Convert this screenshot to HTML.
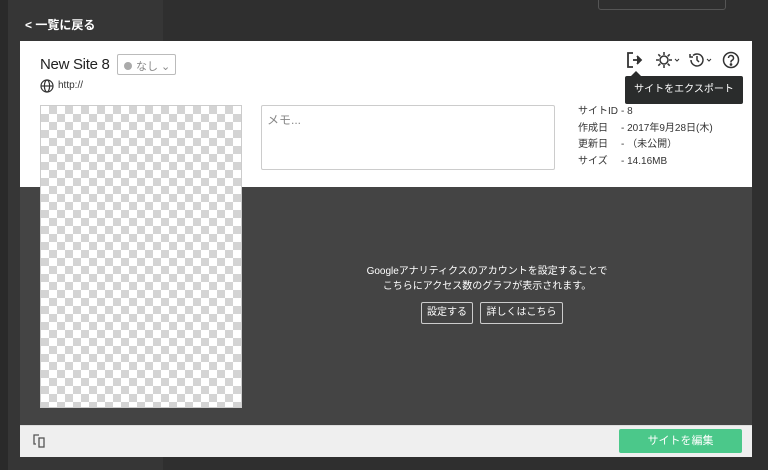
<!DOCTYPE html>
<html><head><meta charset="utf-8"><style>
*{margin:0;padding:0;box-sizing:border-box}
body{width:768px;height:470px;overflow:hidden;background:#2f2f2f;font-family:"Liberation Sans","Noto Sans CJK JP",sans-serif;position:relative}
.abs{position:absolute}
</style></head><body>
<div class="abs" style="left:0;top:0;width:163px;height:470px;background:#363636"></div>
<div class="abs" style="left:0;top:0;width:8px;height:470px;background:#2a2a2a"></div>
<div class="abs" style="left:598px;top:-10px;width:128px;height:20px;border:1px solid #555;border-radius:3px"></div>
<div class="abs" style="left:25px;top:16px;color:#fff;font-size:12px;font-weight:bold">&lt; 一覧に戻る</div>
<div class="abs" style="left:20px;top:41px;width:732px;height:146px;background:#fff"></div>
<div class="abs" style="left:20px;top:187px;width:732px;height:238px;background:#444"></div>
<div class="abs" style="left:20px;top:425px;width:732px;height:32px;background:#efefef;border-top:1px solid #ddd"></div>
<div class="abs" style="left:40px;top:56px;font-size:15px;color:#222;letter-spacing:-0.3px">New Site 8</div>
<div class="abs" style="left:117px;top:54px;width:59px;height:21px;border:1px solid #bbb;border-radius:2px;font-size:11px;color:#888;padding:3px 0 0 6px;white-space:nowrap"><span style="display:inline-block;width:8px;height:8px;border-radius:50%;background:#aaa;margin-right:4px"></span>なし ⌄</div>
<svg class="abs" style="left:40px;top:79px" width="14" height="14" viewBox="0 0 14 14" fill="none" stroke="#333" stroke-width="1.2"><circle cx="7" cy="7" r="6"/><ellipse cx="7" cy="7" rx="2.6" ry="6"/><path d="M1 7h12"/></svg>
<div class="abs" style="left:58px;top:80px;font-size:10px;color:#333">http://</div>
<div class="abs" style="left:40px;top:105px;width:202px;height:303px;border:1px solid #ccc;background-color:#fff;background-image:linear-gradient(45deg,#d4d4d4 25%,transparent 25%,transparent 75%,#d4d4d4 75%),linear-gradient(45deg,#d4d4d4 25%,transparent 25%,transparent 75%,#d4d4d4 75%);background-size:16px 16px;background-position:0 0,8px 8px"></div>
<div class="abs" style="left:261px;top:105px;width:294px;height:65px;border:1px solid #ccc;border-radius:2px;font-size:12px;color:#888;padding:5px 5px">メモ...</div>
<div class="abs" style="left:578px;top:104px;font-size:10px;color:#333;line-height:16.5px">サイトID<br>作成日<br>更新日<br>サイズ</div>
<div class="abs" style="left:621px;top:104px;font-size:10px;color:#333;line-height:16.5px">- 8<br>- 2017年9月28日(木)<br>- （未公開）<br>- 14.16MB</div>
<svg class="abs" style="left:626px;top:51px" width="20" height="18" viewBox="0 0 20 18" fill="none" stroke="#333" stroke-width="1.8"><path d="M7 2H2v14h5"/><path d="M7 9h7" /><path d="M11 5l4 4-4 4" fill="#333"/></svg>
<svg class="abs" style="left:655px;top:51px" width="28" height="18" viewBox="0 0 28 18" fill="none" stroke="#333" stroke-width="1.5"><circle cx="9" cy="9" r="4"/><path d="M9 1v3M9 14v3M1 9h3M14 9h3M3.3 3.3l2 2M12.7 12.7l2 2M3.3 14.7l2-2M12.7 5.3l2-2"/><path d="M20 8l2 2 2-2" stroke-width="1"/></svg>
<svg class="abs" style="left:688px;top:51px" width="28" height="18" viewBox="0 0 28 18" fill="none" stroke="#333" stroke-width="1.5"><path d="M3 9a6 6 0 1 0 2-4.5"/><path d="M2 3v3h3"/><path d="M9 5v4l2 2"/><path d="M19 8l2 2 2-2" stroke-width="1"/></svg>
<svg class="abs" style="left:722px;top:51px" width="18" height="18" viewBox="0 0 18 18" fill="none" stroke="#333" stroke-width="1.5"><circle cx="9" cy="9" r="7.5"/><path d="M6.5 7a2.5 2.5 0 1 1 3.5 2.3c-.7.3-1 .8-1 1.5v.7"/><circle cx="9" cy="13.5" r=".6" fill="#333"/></svg>
<div class="abs" style="left:631px;top:71px;width:0;height:0;border-left:5px solid transparent;border-right:5px solid transparent;border-bottom:5px solid #2a2c2c"></div>
<div class="abs" style="left:625px;top:76px;width:118px;height:28px;background:#2a2c2c;color:#fff;font-size:10px;line-height:28px;text-align:center;border-radius:2px">サイトをエクスポート</div>
<div class="abs" style="left:340px;top:264px;width:294px;text-align:center;color:#fff;font-size:10px;line-height:15px">Googleアナリティクスのアカウントを設定することで<br>こちらにアクセス数のグラフが表示されます。</div>
<div class="abs" style="left:421px;top:302px;width:52px;height:22px;border:1px solid #ccc;border-radius:2px;color:#fff;font-size:10px;line-height:20px;text-align:center">設定する</div>
<div class="abs" style="left:480px;top:302px;width:83px;height:22px;border:1px solid #ccc;border-radius:2px;color:#fff;font-size:10px;line-height:20px;text-align:center">詳しくはこちら</div>
<svg class="abs" style="left:32px;top:433px" width="16" height="16" viewBox="0 0 16 16" fill="none" stroke="#555" stroke-width="1.3"><path d="M7 2H2v9h2"/><rect x="7" y="5" width="5" height="9"/></svg>
<div class="abs" style="left:619px;top:429px;width:123px;height:24px;background:#4bc88a;border-radius:2px;color:#fff;font-size:11px;line-height:24px;text-align:center">サイトを編集</div>
</body></html>
